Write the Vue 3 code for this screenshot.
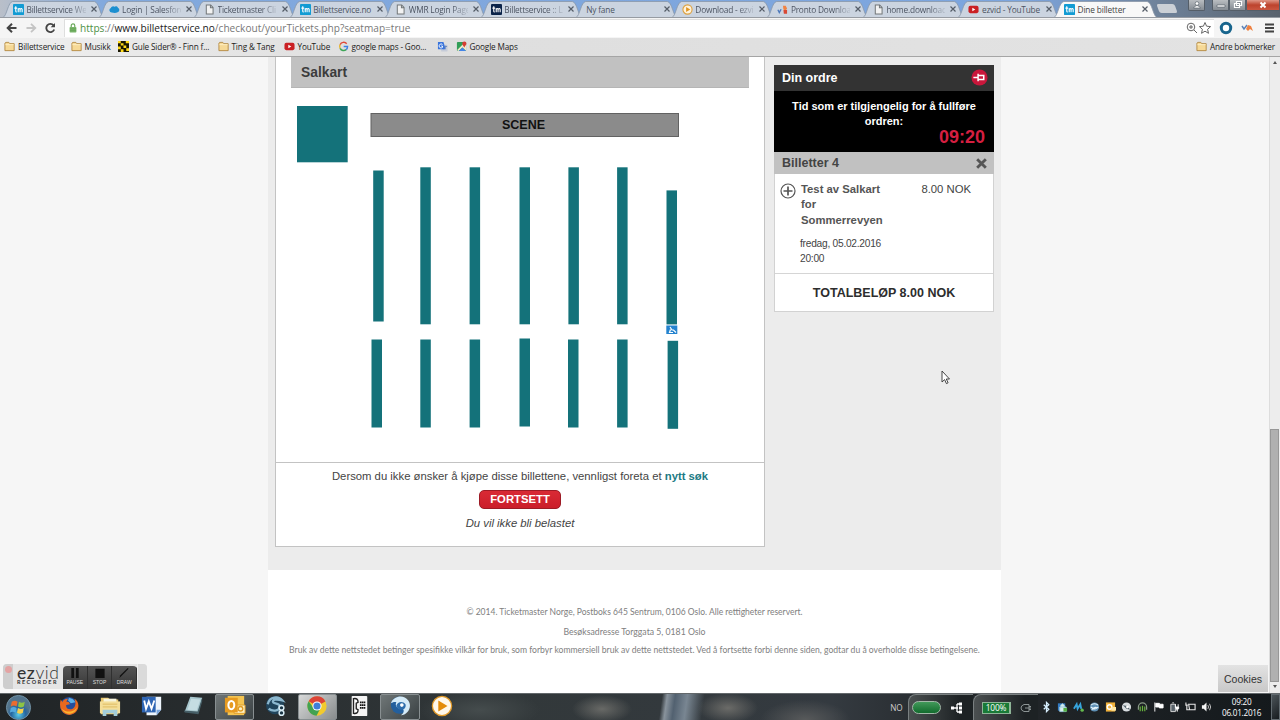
<template>
  <svg class="sprite" width="0" height="0">
    <symbol id="i-tm" viewBox="0 0 12 12"><rect width="12" height="12" rx=".5" fill="#129bd3" /><path d="M3 2.5v5.3q0 1 1.2 1M1.5 4.5h3M5.7 9V4.5M5.7 6q1.2-2.3 2 0v3M7.7 6q1.6-2.3 2.3 0v3" fill="none" stroke="#fff" stroke-width="1.2" /></symbol>
    <symbol id="i-tmdark" viewBox="0 0 12 12"><rect width="12" height="12" rx="1" fill="#0b2349" /><path d="M3 2.5v5.3q0 1 1.2 1M1.5 4.5h3M5.7 9V4.5M5.7 6q1.2-2.3 2 0v3M7.7 6q1.6-2.3 2.3 0v3" fill="none" stroke="#fff" stroke-width="1.2" /></symbol>
    <symbol id="i-cloud" viewBox="0 0 12 12"><path d="M3 9.3a2.6 2.6 0 0 1-1-5A2.7 2.7 0 0 1 6 3a2.5 2.5 0 0 1 3.8 1A2.7 2.7 0 0 1 9.4 9Q7 10.4 3 9.3z" fill="#1c8fd0" /></symbol>
    <symbol id="i-page" viewBox="0 0 12 12"><path d="M2.5 1h4.8l2.6 2.8V11H2.5zM7 1v3h3" fill="#f2f2f2" stroke="#737779" stroke-width="1.1" /></symbol>
    <symbol id="i-play" viewBox="0 0 12 12"><circle cx="6" cy="6" r="5" fill="#fff3dc" stroke="#dda13f" stroke-width="1.2" /><path d="M4.5 3.3v5.4L9 6z" fill="#e29520" /></symbol>
    <symbol id="i-pronto" viewBox="0 0 12 12"><path d="M1 6.2l1.5 3 2-3.5" fill="none" stroke="#4e79bb" stroke-width="1.5" /><path d="M6.5 2h3l1.5 3-1.5 2-2.500-1z" fill="#f08343" /><path d="M7 6.5h4v4H7.5z" fill="#d94935" /></symbol>
    <symbol id="i-yt" viewBox="0 0 12 12"><rect x=".5" y="2" width="11" height="8" rx="2" fill="#ca2024" /><path d="M4.7 4v4L8 6z" fill="#fff" /></symbol>
    <symbol id="i-folder" viewBox="0 0 12 12"><path d="M1 10.5V2.3L2 1.5h3.3l1 1.4h4.8v7.6z" fill="#f6d997" stroke="#ad8138" stroke-width=".9" /><path d="M1.5 4h9" stroke="#fff0c5" /></symbol>
    <symbol id="i-gule" viewBox="0 0 12 12"><path d="M0 0h12v12H0z" fill="#191600" /><path d="M0 0h3v2.5H0zM8.5 0H12v2.5H8.5zM3 2.5h3V5H3zM6 5h3v2.5H6zM0 6h3v3H0zM9 8h3v3H9zM3 9h3v3H3z" fill="#ffda18" /></symbol>
    <symbol id="i-google" viewBox="0 0 12 12"><g fill="none" stroke-width="1.6"><path d="M9.5 3A4.3 4.3 0 0 0 2.3 4" stroke="#df4937" /><path d="M2.3 4a4.3 4.3 0 0 0 0 4" stroke="#e7b42e" /><path d="M2.3 8a4.3 4.3 0 0 0 6.6 1.4" stroke="#3da657" /><path d="M8.9 9.4q1.5-1 1.5-3.3H6.2" stroke="#3f7fe3" /></g></symbol>
    <symbol id="i-translate" viewBox="0 0 12 12"><rect x="4.5" y="4" width="7" height="7.5" rx="1" fill="#c5cbd8" /><path d="M1 1h6l2.5 8H1z" fill="#3974dc" /><path d="M6 3.8A2.2 2.2 0 1 0 6 7V5.5H4.5" fill="none" stroke="#fff" /><path d="M7.5 6h3.5M9.5 5v1q-.5 2-2 3.2" fill="none" stroke="#5c7fbb" stroke-width=".8" /></symbol>
    <symbol id="i-maps" viewBox="0 0 12 12"><rect x="1" y="1" width="10" height="10" rx="1" fill="#319e57" /><path d="M1 10L10 1l1 2v8l-4-4-4 4z" fill="#f0e8cb" /><path d="M3 11l4-4 4 4z" fill="#4384e8" /><path d="M9 7C8 5 6.8 4.5 6.8 2.8a2.3 2.3 0 0 1 4.6 0C11.4 4.5 10 5 9 7z" fill="#d53e34" /></symbol>

    <symbol id="t-firefox" viewBox="0 0 24 24"><circle cx="12" cy="12" r="9.7" fill="#264d9b" /><path d="M12 3q5 1 7 5l-5 1-3-3z" fill="#5bb2e8" /><path d="M3 5q-2 7 1 12c5 8 16 5 18-3 1-5-1-8-4-10 2 5 1 9-2 11-4 2-8-1-7-4l4-1-1-2-3-1 2-3C7 4 5 6 5 8z" fill="#e8681e" /><path d="M4 15c4 8 15 7 17-2-2 4-10 8-17 2z" fill="#f9b42f" /></symbol>
    <symbol id="t-explorer" viewBox="0 0 24 24"><path d="M2 3h8l2 2h9v16H2z" fill="#e9c76c" /><path d="M5 4h14v5H5z" fill="#f7f5de" /><path d="M1 7h22v13H1z" fill="#f4de98" /><path d="M4 23v-7h16v7h-4v-3H8v3z" fill="#a3cdd9" /><path d="M4 10h16M4 13h16" stroke="#ddb95f" /></symbol>
    <symbol id="t-word" viewBox="0 0 24 24"><path d="M6 2h16v14l-5 6H6z" fill="#eef5fc" /><path d="M1 2h15v17H1z" fill="#2e65b4" /><path d="M3.5 6l2 9 3-8 3 8 3-9" fill="none" stroke="#fff" stroke-width="2" /><path d="M17 16h5l-5 6z" fill="#7ba6dc" /></symbol>
    <symbol id="t-note" viewBox="0 0 24 24"><path d="M9 2l13 1-4 16-15-1z" fill="#a8c7ce" /><path d="M10 4l10 1-4 12-10-1z" fill="#c5dde2" /><path d="M2 17l15 1 5-15v4l-4 14-15-2z" fill="#465f67" /></symbol>
    <symbol id="t-outlook" viewBox="0 0 24 24"><path d="M4 1h18v21H4z" fill="#f4c451" /><path d="M11 11h12v9H11z" fill="#fff2c6" stroke="#dc9a24" /><path d="M1 3h14v16H1z" fill="#e69a20" /><ellipse cx="8" cy="11" rx="3.2" ry="4.5" fill="none" stroke="#fff" stroke-width="2.2" /><circle cx="18" cy="15" r="2.5" fill="none" stroke="#e09c24" stroke-width="1.5" /></symbol>
    <symbol id="t-swirl" viewBox="0 0 24 24"><circle cx="11" cy="11" r="10" fill="#20445b" /><path d="M3 10c2-9 12-9 16-4-6-2-12-1-10 2 2 2 8 1 7 5-1 5-8 5-12 2" fill="none" stroke="#8bb7ce" stroke-width="2.5" /><circle cx="18" cy="14" r="2.600" fill="#173243" stroke="#d9edf5" stroke-width="1.6" /><circle cx="18" cy="19.500" r="2.600" fill="#173243" stroke="#d9edf5" stroke-width="1.6" /></symbol>
    <symbol id="t-chrome" viewBox="0 0 24 24"><circle cx="12" cy="12" r="10.5" fill="#f1ca2e" /><path d="M12 12L2.9 6.7A10.5 10.5 0 0 1 21.2 7z" fill="#dc4437" /><path d="M2.9 6.7A10.5 10.5 0 0 0 11.5 22.5L16 14l-8 0z" fill="#42a252" /><circle cx="12" cy="12" r="5" fill="#fff" /><circle cx="12" cy="12" r="3.9" fill="#3f7fd8" /></symbol>
    <symbol id="t-phone" viewBox="0 0 24 24"><rect x="4" y="1" width="17" height="22" rx="1" fill="#f4f4f4" /><path d="M6 4q5-1 5 4l-2 1v6l2 1q0 5-5 4z" fill="#fff" stroke="#222" stroke-width="1.5" /><path d="M13 8h6M13 11h6M13 14h6" stroke="#111" stroke-width="2" stroke-dasharray="1.7 .4" /></symbol>
    <symbol id="t-bird" viewBox="0 0 24 24"><circle cx="11.5" cy="11" r="9.5" fill="#235f9d" /><path d="M2 9C5 1 16-1 21 6c5 7-1 16-8 16 3-2 4-5 2-7-6 1-9-3-7-7-2-1-4 0-6 1z" fill="#d5ebf8" /><path d="M8 12c1-5 7-6 10-2 1 4-2 6-5 6-2 0-4-1-5-4z" fill="#2e6dab" /><circle cx="14" cy="11" r="2" fill="#fff" /></symbol>
    <symbol id="t-play" viewBox="0 0 24 24"><circle cx="12" cy="12" r="10.5" fill="#fff8eb" stroke="#e29a28" stroke-width="1.4" /><path d="M8 6v12l10-6z" fill="#e48c0a" /></symbol>

    <symbol id="s-bt" viewBox="0 0 12 12"><path d="M3 3.5l5.5 5L6 11V1l2.5 2.5L3 8.5" fill="none" stroke="#d8f0ff" stroke-width="1.4" /></symbol>
    <symbol id="s-lock" viewBox="0 0 12 12"><rect x="1" y="2" width="8" height="8" fill="#347bc3" /><path d="M4 6V4q2-3 4 0v2M3 6h7v5H3z" fill="#d9f0ee" stroke="#9dc8dd" /><path d="M7 7h4v4H7z" fill="#54ae45" /></symbol>
    <symbol id="s-m" viewBox="0 0 12 12"><path d="M1 8l3-5 1 5 3-5 1 5" fill="none" stroke="#36a4dc" stroke-width="2" /><circle cx="10" cy="9.5" r="1.8" fill="#64b94d" /></symbol>
    <symbol id="s-globe" viewBox="0 0 12 12"><circle cx="6" cy="6" r="5" fill="#5f90b5" /><path d="M2 4q4-3 8 0M2 6q5 4 8 0M3 9q3-4 6-2" fill="none" stroke="#e6f4fa" stroke-width="1.2" /></symbol>
    <symbol id="s-out" viewBox="0 0 12 12"><path d="M1 1h10v10H1z" fill="#f1b23b" /><circle cx="5" cy="6" r="2.5" fill="none" stroke="#fff" stroke-width="1.6" /><path d="M7 6h5v4H7z" fill="#ffe9a7" /></symbol>
    <symbol id="s-disc" viewBox="0 0 12 12"><circle cx="6" cy="6" r="5" fill="#d8dde0" /><path d="M2 4l5 1 3 4-4-1z" fill="#51606a" /><circle cx="7" cy="6" r="1.5" fill="#fff" /></symbol>
    <symbol id="s-head" viewBox="0 0 12 12"><path d="M1.5 9V6a4.5 4.5 0 0 1 9 0v3" fill="none" stroke="#8a9a88" stroke-width="1.3" /><path d="M3.5 5.5v5M6 4.5v6M8.5 5.5v5" stroke="#67b23d" stroke-width="1.3" /></symbol>
    <symbol id="s-flag" viewBox="0 0 12 12"><path d="M2 1v10M3 2h4v1h4v4H7V6H3z" fill="#fff" stroke="#fff" /></symbol>
    <symbol id="s-power" viewBox="0 0 12 12"><path d="M2 3h5v8H2zM3.5 1.5h2" fill="#59636a" stroke="#ddd" /><path d="M7 3v3M10 3v3M6.5 6h4v2L9 9v2" fill="#fff" stroke="#fff" /></symbol>
    <symbol id="s-net" viewBox="0 0 12 12"><path d="M4 3h7v6H5zM1 1v3h2M2 4v5h3" fill="none" stroke="#e9e9e9" stroke-width="1.2" /></symbol>
    <symbol id="s-sound" viewBox="0 0 12 12"><path d="M1 4h2l3-3v10L3 8H1z" fill="#f4f4f4" /><path d="M7.5 4q1.5 2 0 4M9.3 2.5q2.5 3.5 0 7" fill="none" stroke="#ccc" /></symbol>
  </svg>

  <div class="screen">
    <header class="browser">
      <div class="tabs">
        <div v-for="(tab, i) in tabs" :key="i" class="tab" :class="{ '--active': tab.active }">
          <svg class="tab__shape" viewBox="0 0 104 17" preserveAspectRatio="none">
            <path d="M0 17.5C4 16 5 2 10 1.5H94C99 2 100 16 104 17.5" />
          </svg>
          <svg v-if="tab.icon" class="tab__icon"><use :href="'#i-' + tab.icon" /></svg>
          <span class="tab__title" :class="{ '--fade': tab.fade }">{{ tab.title }}</span>
          <svg class="tab__close" viewBox="0 0 8 8"><path d="M1.5 1.5l5 5M6.5 1.5l-5 5" /></svg>
        </div>
        <div class="tabs__new"></div>
        <div class="win">
          <span class="win__btn --user"><svg viewBox="0 0 14 10"><circle cx="7" cy="3.5" r="1.8" /><path d="M3.5 8q3.5-5 7 0z" /></svg></span>
          <span class="win__btn"><svg viewBox="0 0 14 10"><path d="M3 5h8v2H3z" /></svg></span>
          <span class="win__btn"><svg viewBox="0 0 14 10"><path d="M5.5 1.5h5v4h-5zM3.5 3.5h5v4h-5z" class="hollow" /></svg></span>
          <span class="win__btn --close"><svg viewBox="0 0 14 10"><path d="M4.5 2.5l5 5M9.5 2.5l-5 5" class="x" /></svg></span>
        </div>
      </div>

      <div class="toolbar">
        <svg class="toolbar__nav" viewBox="0 0 60 20">
          <path d="M16.5 10H8M12 5.8L7.7 10l4.3 4.2" stroke="#444" stroke-width="2" />
          <path d="M26.5 10H35M31 5.8l4.3 4.2L31 14.2" stroke="#c4c4c4" stroke-width="1.8" />
          <path d="M53.5 7.3A4.1 4.1 0 1 0 54.2 11.5" stroke="#444" stroke-width="1.9" />
          <path d="M55 5v4.3h-4.3z" fill="#444" />
        </svg>
        <div class="url">
          <svg class="url__lock" viewBox="0 0 9 12"><path d="M2.5 5V3.3a2 2 0 0 1 4 0V5" fill="none" stroke="#69a85a" stroke-width="1.3" /><rect x=".7" y="5" width="7.6" height="6" rx=".8" fill="#79b56a" /><path d="M1 7h7M1 9h7" stroke="#579848" stroke-width=".6" /></svg>
          <span class="url__text"><i>https</i>://<b>www.billettservice.no</b>/checkout/yourTickets.php?seatmap=true</span>
          <svg class="url__icons" viewBox="0 0 28 14">
            <circle cx="6" cy="6" r="3.8" /><path d="M9 9l3 3M4 6h4M6 4v4" />
            <path d="M20 1.5l1.6 3.7 4 .4-3 2.7.9 4-3.5-2.1-3.5 2.1.9-4-3-2.7 4-.4z" />
          </svg>
        </div>
        <svg class="toolbar__ext" viewBox="0 0 60 20">
          <circle cx="12" cy="10" r="4.7" fill="#fff" stroke="#18658d" stroke-width="3" />
          <path d="M28 8l2 3 3-4" stroke="#5b83b8" stroke-width="1.5" fill="none" /><path d="M32 11l2-4 3 1 2 5-3-2-2 2z" fill="#ee8040" />
          <path d="M51 6.5h9M51 10h9M51 13.5h9" stroke="#444" stroke-width="1.8" />
        </svg>
      </div>

      <nav class="bookmarks">
        <a v-for="mark in bookmarks" :key="mark.icon + mark.label" class="bookmark" :style="{ width: mark.width + 'px' }">
          <svg><use :href="'#i-' + mark.icon" /></svg>{{ mark.label }}
        </a>
        <a class="bookmark --other"><svg><use href="#i-folder" /></svg>Andre bokmerker</a>
      </nav>
    </header>

    <main class="page">
      <div class="site">
        <div class="site__body">
          <section class="tickets">
            <h2 class="tickets__title">Salkart</h2>
            <svg class="seatmap" viewBox="276 88 488 374">
              <rect x="297" y="106" width="50.7" height="56.3" class="seats" />
              <rect x="371" y="113.5" width="307.5" height="23" class="stage" />
              <text x="523.5" y="129" class="stage__label">SCENE</text>
              <rect v-for="(r, i) in rows" :key="i" :x="r[0]" :y="r[1]" width="10.5" :height="r[2]" class="seats" />
              <rect x="666.3" y="325.5" width="11" height="8.5" fill="#2483cf" />
              <path d="M670 327l2 3h1.5l2.5 2.5M670.5 329.5l-1 3h3.5" fill="none" stroke="#fff" stroke-width="1.2" />
            </svg>
            <div class="tickets__next">
              <p class="search">Dersom du ikke ønsker å kjøpe disse billettene, vennligst foreta et <a>nytt søk</a></p>
              <button class="continue"><span>FORTSETT</span></button>
              <p class="note">Du vil ikke bli belastet</p>
            </div>
          </section>

          <aside class="order">
            <div class="order__head">
              <span>Din ordre</span>
              <svg viewBox="0 0 18 18"><circle cx="9" cy="9" r="8.5" fill="#c9173b" /><path d="M2.5 9H7M7.5 5v8M7.5 6.8h6v4.4h-6" fill="none" stroke="#fff" stroke-width="1.6" /></svg>
            </div>
            <div class="order__timer">
              <p>Tid som er tilgjengelig for å fullføre ordren:</p>
              <strong>09:20</strong>
            </div>
            <div class="order__count">
              <span>Billetter 4</span>
              <svg viewBox="0 0 12 12"><path d="M2 2l8 8M10 2l-8 8" stroke="#555" stroke-width="2.6" /></svg>
            </div>
            <div class="order__item">
              <svg viewBox="0 0 16 16"><circle cx="8" cy="8" r="7" /><path d="M3.5 8h9M8 3.5v9" stroke-width="1.7" /></svg>
              <div class="order__event">
                <b>Test av Salkart<br />for<br />Sommerrevyen</b>
                <p>fredag, 05.02.2016<br />20:00</p>
              </div>
              <span class="order__price">8.00 NOK</span>
            </div>
            <div class="order__total"><span>TOTALBELØP 8.00 NOK</span></div>
          </aside>
        </div>

        <footer class="legal">
          <p class="legal__owner">© 2014. Ticketmaster Norge, Postboks 645 Sentrum, 0106 Oslo. Alle rettigheter reservert.</p>
          <p>Besøksadresse Torggata 5, 0181 Oslo</p>
          <p class="legal__terms">Bruk av dette nettstedet betinger spesifikke vilkår for bruk, som forbyr kommersiell bruk av dette nettstedet. Ved å fortsette forbi denne siden, godtar du å overholde disse betingelsene.</p>
        </footer>
      </div>

      <div class="scrollbar"><i class="up"></i><div class="scrollbar__thumb"></div><i class="down"></i></div>
      <button class="cookies">Cookies</button>

      <div class="recorder">
        <div class="recorder__grip"><i></i></div>
        <div class="recorder__logo"><span><b>ez</b>vid</span><small>RECORDER</small></div>
        <div class="recorder__tools">
          <div><svg viewBox="0 0 14 13"><path d="M3 1h3v11H3zM8 1h3v11H8z" /></svg>PAUSE</div>
          <div><svg viewBox="0 0 14 13"><path d="M2 2h10v10H2z" /></svg>STOP</div>
          <div><svg viewBox="0 0 14 13"><path d="M2 12l1-3 8-8 1 1-8 8z" /></svg>DRAW</div>
        </div>
        <div class="recorder__grip --end"></div>
      </div>

      <svg class="cursor" viewBox="0 0 10 16"><path d="M1 1v11l2.6-2.4 1.8 4 1.7-.8-1.8-3.8H8.5z" fill="#fff" stroke="#333" stroke-width=".9" /></svg>
    </main>

    <footer class="taskbar">
      <svg class="start" viewBox="0 0 28 28">
        <defs><radialGradient id="orb" cy=".8"><stop stop-color="#5bcbe6" /><stop offset=".6" stop-color="#2566a0" /><stop offset="1" stop-color="#53748c" /></radialGradient></defs>
        <circle cx="14" cy="14" r="12.5" fill="url(#orb)" stroke="#7193a5" />
        <path d="M7 8q3-2 6 0l-1 5q-3-2-6 0z" fill="#ec6c2f" /><path d="M14.5 8q3 2 6 0l-1 5q-3 2-6 0z" fill="#8dc444" /><path d="M6 14.5q3-2 6 0l-1 5q-3-2-6 0z" fill="#56a9de" /><path d="M13.5 14.5q3 2 6 0l-1 5q-3 2-6 0z" fill="#f7cf4b" />
      </svg>
      <div class="apps">
        <div v-for="app in apps" :key="app.icon" class="app" :class="app.state">
          <svg><use :href="'#t-' + app.icon" /></svg>
        </div>
      </div>
      <span class="lang">NO</span>
      <div class="dock">
        <i class="pill"></i>
        <svg viewBox="0 0 12 12"><path d="M1 6h6M6 2v8M6 2h3M6 10h3" fill="none" stroke="#fff" stroke-width="1.3" /><path d="M0 4.5h3v3H0zM8 .5h3v3H8zM8 4.5h3v3H8zM8 8.5h3v3H8z" fill="#fff" /></svg>
      </div>
      <div class="dock --battery">
        <span class="charge">100%</span>
        <svg viewBox="0 0 12 12"><path d="M9 2.5H4Q1 3.5 1 6t3 3.5h5zM5 6h6M9 4.5h2M9 7.5h2" fill="none" stroke="#8c9494" /></svg>
      </div>
      <div class="tray">
        <svg v-for="name in tray" :key="name"><use :href="'#s-' + name" /></svg>
      </div>
      <div class="clock">09:20<br />06.01.2016</div>
      <div class="desktop"></div>
    </footer>
  </div>
</template>

<script setup>
const tabs = [
  { icon: 'tm', title: 'Billettservice We', fade: true },
  { icon: 'cloud', title: 'Login | Salesforc', fade: true },
  { icon: 'page', title: 'Ticketmaster Cli', fade: true },
  { icon: 'tm', title: 'Billettservice.no' },
  { icon: 'page', title: 'WMR Login Page', fade: true },
  { icon: 'tmdark', title: 'Billettservice :: Lo', fade: true },
  { icon: '', title: 'Ny fane' },
  { icon: 'play', title: 'Download - ezvi', fade: true },
  { icon: 'pronto', title: 'Pronto Downloa', fade: true },
  { icon: 'page', title: 'home.download', fade: true },
  { icon: 'yt', title: 'ezvid - YouTube' },
  { icon: 'tm', title: 'Dine billetter', active: true },
]

const bookmarks = [
  { icon: 'folder', label: 'Billettservice', width: 66.5 },
  { icon: 'folder', label: 'Musikk', width: 47.5 },
  { icon: 'gule', label: 'Gule Sider® - Finn f...', width: 99.5 },
  { icon: 'folder', label: 'Ting & Tang', width: 66 },
  { icon: 'yt', label: 'YouTube', width: 54 },
  { icon: 'google', label: 'google maps - Goo...', width: 99 },
  { icon: 'translate', label: '', width: 19 },
  { icon: 'maps', label: 'Google Maps', width: 80 },
]

// x, y, height of each block of seats
const rows = [
  [373.2, 170.5, 151],
  [420.3, 167.3, 157],
  [469.6, 167.3, 157],
  [519.5, 167.3, 157],
  [568.4, 167.3, 157],
  [617.1, 167.3, 157],
  [666.5, 190.4, 134],
  [371.5, 339.5, 88],
  [420.3, 339.5, 88],
  [469.6, 339.5, 88],
  [519.5, 338.5, 88],
  [568, 339.5, 88],
  [617.1, 339.5, 88],
  [667.6, 340.8, 88],
]

const apps = [
  { icon: 'firefox' },
  { icon: 'explorer' },
  { icon: 'word' },
  { icon: 'note' },
  { icon: 'outlook', state: '--open' },
  { icon: 'swirl' },
  { icon: 'chrome', state: '--current' },
  { icon: 'phone' },
  { icon: 'bird', state: '--open' },
  { icon: 'play' },
]

const tray = ['bt', 'lock', 'm', 'globe', 'out', 'disc', 'head', 'flag', 'power', 'net', 'sound']
</script>

<style>
body {
  overflow: hidden;
}
</style>

<style scoped>
* {
  box-sizing: border-box;
}

svg {
  flex: none;
  display: block;
}

p,
h2 {
  margin: 0;
}

.sprite {
  position: absolute;
}

.screen {
  width: 1280px;
  height: 720px;
  display: flex;
  flex-direction: column;
  font-family: 'Liberation Sans', Arial, sans-serif;
  color: #444;
}

.browser {
  height: 57px;
  font-family: 'Open Sans', 'Noto Sans', sans-serif;
}

.tabs {
  height: 17px;
  padding-left: 3px;
  display: flex;
  background: linear-gradient(90deg, #b9bfc9, #82a9dd 8%, #7ca5de 80%, #70849d 90%, #59626d);
}

.tab {
  position: relative;
  width: 95.55px;
  flex: none;
  padding: 1px 0 0 10px;
  display: flex;
  align-items: center;
  font-size: 8.3px;
  letter-spacing: -0.2px;
  color: #4d5563;
}

.tab__shape {
  position: absolute;
  left: 0;
  top: 0;
  width: 101px;
  height: 17px;
  fill: #cbd4e0;
  stroke: #8996a8;
  stroke-width: 0.8;
}

.tab.--active {
  width: 102px;
  z-index: 2;
  letter-spacing: -0.15px;
  color: #444;
}

.--active .tab__shape {
  width: 103px;
  fill: #f8f8f8;
}

.tab__icon {
  position: relative;
  width: 11px;
  height: 11px;
  margin-right: 2.5px;
}

.tab__title {
  position: relative;
  flex: 1;
  min-width: 0;
  white-space: nowrap;
}

.tab__title.--fade {
  mask-image: linear-gradient(90deg, #000 72%, rgba(0, 0, 0, 0.15));
}

.tab__close {
  position: relative;
  width: 8px;
  height: 8px;
  margin: 0 1px 0 4px;
  stroke: #555d68;
  stroke-width: 1.2;
}

.--active .tab__close {
  margin-right: 7px;
}

.tabs__new {
  width: 18px;
  height: 9px;
  margin: 4px 0 0 2px;
  transform: skewX(20deg);
  border-radius: 2px;
  background: #cbd0d6;
}

.win {
  margin-left: auto;
  display: flex;
  height: 11px;
}

.win__btn {
  width: 17px;
  border: 1px solid #555e68;
  border-top: 0;
  border-radius: 0 0 2px 2px;
  background: linear-gradient(#b9bdc1, #858c94);
}

.win__btn svg {
  width: 14px;
  height: 10px;
  margin: 0 auto;
  fill: #fff;
  stroke: #4f5962;
  stroke-width: 0.6;
}

.win__btn .hollow {
  fill: #858c94;
  stroke: #fff;
  stroke-width: 1.2;
}

.win__btn .x {
  stroke: #fff;
  stroke-width: 2;
}

.win__btn.--user {
  margin-right: 7px;
}

.win__btn.--close {
  width: 34px;
  background: linear-gradient(#df9787, #bd432d 50%, #ca5640);
}

.toolbar {
  height: 21px;
  display: flex;
  align-items: center;
  border-top: 1px solid #969ba2;
  background: #f5f5f5;
}

.toolbar__nav {
  width: 60px;
  height: 20px;
  fill: none;
}

.url {
  width: 1150px;
  height: 18px;
  margin-left: 4px;
  padding: 0 1px 1px 4px;
  display: flex;
  align-items: center;
  background: #fff;
  border: 1px solid #dedede;
  border-width: 1px 0 0 1px;
}

.url__lock {
  width: 8px;
  height: 12px;
}

.url__text {
  margin-left: 3px;
  font-size: 10.1px;
  color: #777;
}

.url__text i {
  font-style: normal;
  color: #4e9144;
}

.url__text b {
  font-weight: 400;
  color: #222;
}

.url__icons {
  width: 28px;
  height: 14px;
  margin-left: auto;
  fill: none;
  stroke: #666;
}

.toolbar__ext {
  width: 60px;
  height: 20px;
}

.bookmarks {
  height: 19px;
  padding: 0 5px 1px 4px;
  display: flex;
  align-items: center;
  background: linear-gradient(90deg, #efefef, #dedede 30%, #e3e3e3);
  border-bottom: 1px solid #a5a5a5;
}

.bookmark {
  display: flex;
  align-items: center;
  gap: 3px;
  flex: none;
  font-size: 8.2px;
  letter-spacing: -0.15px;
  white-space: nowrap;
  color: #222;
}

.bookmark svg {
  width: 11px;
  height: 11px;
}

.bookmark.--other {
  margin-left: auto;
}

.page {
  position: relative;
  height: 636px;
  background: #f6f6f6;
}

.site {
  width: 733px;
  height: 636px;
  margin-left: 268px;
  background: #fff;
}

.site__body {
  height: 513px;
  padding: 0 7px;
  display: flex;
  justify-content: space-between;
  align-items: flex-start;
  background: #ececec;
}

.tickets {
  width: 490px;
  height: 490px;
  border: 1px solid #c3c3c3;
  border-top: 0;
  background: #fff;
}

.tickets__title {
  height: 31px;
  margin: 0 15px;
  padding-left: 10px;
  line-height: 31px;
  font-size: 13.8px;
  color: #3c3c3c;
  background: #c1c1c1;
  border-bottom: 1px solid #b5b5b5;
}

.seatmap {
  width: 488px;
  height: 374px;
}

.seats {
  fill: #14727a;
}

.stage {
  fill: #8b8b8b;
  stroke: #626262;
}

.stage__label {
  font-size: 12.5px;
  font-weight: 700;
  text-anchor: middle;
  fill: #111;
}

.tickets__next {
  height: 84px;
  padding-top: 6px;
  border-top: 1px solid #c3c3c3;
  display: flex;
  flex-direction: column;
  align-items: center;
  font-size: 11.3px;
  line-height: 14px;
}

.search a {
  color: #1c7a84;
  font-weight: 700;
}

.continue {
  width: 82px;
  height: 19px;
  margin: 7px 0;
  padding: 0 0 2px;
  border: 1px solid #9d1b25;
  border-radius: 5px;
  font: 700 11.3px 'Liberation Sans', Arial, sans-serif;
  color: #fff;
  background: linear-gradient(#d92a35, #cb1e2a);
}

.note {
  font-style: italic;
}

.order {
  width: 220px;
  margin-top: 8px;
  background: #fff;
  border: 1px solid #d2d2d2;
  border-top: 0;
}

.order__head,
.order__count {
  margin: 0 -1px;
  display: flex;
  align-items: center;
  justify-content: space-between;
  padding: 0 6px 0 8px;
  font-size: 12.5px;
  font-weight: 700;
}

.order__head {
  height: 26px;
  padding-bottom: 1px;
  color: #fff;
  background: #333;
}

.order__head svg {
  width: 17px;
  height: 17px;
}

.order__timer {
  height: 61px;
  margin: 0 -1px;
  padding: 8px 9px 0;
  background: #000;
  color: #fff;
  font-size: 11px;
  line-height: 15.3px;
  font-weight: 700;
  text-align: center;
}

.order__timer strong {
  display: block;
  font-size: 18px;
  line-height: 15px;
  text-align: right;
  color: #d51f40;
}

.order__count {
  height: 22px;
  background: #c1c1c1;
  color: #444;
}

.order__count svg {
  width: 13px;
  height: 13px;
}

.order__item {
  height: 99px;
  padding: 8px 22px 0 5px;
  display: flex;
  font-size: 11.3px;
  line-height: 15.4px;
}

.order__event b {
  color: #555;
}

.order__item svg {
  width: 16px;
  height: 16px;
  margin: 1px 5px 0 0;
  fill: none;
  stroke: #555;
  stroke-width: 1.2;
}

.order__event p {
  margin: 7.5px 0 0 -1px;
  font-size: 10.2px;
  letter-spacing: -0.25px;
}

.order__price {
  margin-left: auto;
}

.order__total {
  height: 38px;
  border-top: 1px solid #d5d5d5;
  text-align: center;
  line-height: 38px;
  font-size: 12.5px;
  font-weight: 700;
  color: #2d2d2d;
}

.legal {
  height: 123px;
  padding-top: 33px;
  text-align: center;
  font: 8.7px/19px Lato, sans-serif;
  color: #808080;
  white-space: nowrap;
}

.legal p {
  margin: 0 -10px;
}

.legal .legal__owner {
  font-size: 8.53px;
}

.legal .legal__terms {
  font-size: 8.6px;
}

.scrollbar {
  position: absolute;
  right: 0;
  top: 0;
  width: 11px;
  height: 636px;
  background: #ededed;
  border-left: 1px solid #ddd;
}

.scrollbar__thumb {
  position: absolute;
  top: 372px;
  left: 0;
  width: 9px;
  height: 253px;
  background: #b0b0b0;
  border: 1px solid #979797;
}

.up,
.down {
  position: absolute;
  left: 3px;
  border: 2px solid transparent;
}

.up {
  top: 2px;
  border-bottom: 3px solid #555;
}

.down {
  bottom: 3px;
  border-top: 3px solid #555;
}

.cookies {
  position: absolute;
  right: 12px;
  bottom: 1px;
  width: 50px;
  height: 27px;
  padding: 0;
  border: 0;
  background: linear-gradient(#e3e3e3, #c8c8c8);
  color: #333;
  font: 10.5px 'Liberation Sans', Arial, sans-serif;
}

.recorder {
  position: absolute;
  left: 3px;
  bottom: 4px;
  width: 144px;
  height: 25px;
  display: flex;
  border-radius: 4px;
  background: #e5e5e5;
}

.recorder__grip {
  width: 10px;
  background: #cecece;
  padding: 2px;
  border-radius: 4px 0 0 4px;
}

.recorder__grip.--end {
  background: #dadada;
  border-left: 1px solid #eee;
  border-radius: 0 4px 4px 0;
}

.recorder__grip i {
  display: block;
  width: 7px;
  height: 7px;
  border-radius: 50%;
  background: #e3a3a3;
}

.recorder__logo {
  width: 50px;
  padding: 2px 0 0 4px;
  font-family: Lato, sans-serif;
  color: #333;
}

.recorder__logo span {
  display: block;
  font-size: 17.5px;
  line-height: 13px;
  font-weight: 300;
  letter-spacing: 0.6px;
}

.recorder__logo b {
  font-weight: 500;
}

.recorder__logo small {
  display: block;
  font-size: 5.5px;
  font-weight: 700;
  line-height: 6px;
  letter-spacing: 1.5px;
}

.recorder__tools {
  width: 74px;
  margin-top: 2px;
  display: flex;
  border-radius: 4px 4px 0 0;
  overflow: hidden;
  background: linear-gradient(#555, #353535);
}

.recorder__tools div {
  flex: 1;
  padding-top: 1px;
  border-right: 1px solid #303030;
  font-size: 5px;
  line-height: 6px;
  text-align: center;
  color: #ddd;
}

.recorder__tools svg {
  width: 14px;
  height: 12px;
  margin: 0 auto;
  fill: #111;
}

.cursor {
  position: absolute;
  left: 941px;
  top: 313px;
  width: 10px;
  height: 16px;
}

.taskbar {
  height: 27px;
  display: flex;
  align-items: center;
  color: #fff;
  font-family: 'Open Sans', 'Noto Sans', sans-serif;
  border-top: 1px solid #63686b;
  background:
    radial-gradient(ellipse 30px 14px at 602px 15px, #686966, transparent),
    radial-gradient(ellipse 30px 15px at 728px 14px, #6b6b68, transparent),
    radial-gradient(ellipse 45px 20px at 805px 26px, #585a5b, transparent),
    linear-gradient(98deg, transparent 656px, #89939c 661px, #526170 669px, #798692 681px, transparent 698px),
    radial-gradient(ellipse 60px 20px at 480px 16px, #454c4d, transparent),
    linear-gradient(90deg, #202426, #32383a 40%, #343a40 65%, #24282b 75%, #14191c);
}

.start {
  width: 27px;
  height: 27px;
  margin: 0 16.3px 0 5px;
}

.apps {
  display: flex;
}

.app {
  width: 41.4px;
  height: 26px;
}

.app svg {
  width: 22px;
  height: 22px;
  margin: 1px auto;
}

.app.--open,
.app.--current {
  width: 39.4px;
  margin: 0 1px;
  border: 1px solid #888f91;
  border-radius: 2px;
  background: linear-gradient(135deg, #6f7677, #3a4143);
}

.app.--open svg,
.app.--current svg {
  margin-top: 0;
}

.app.--current {
  background: linear-gradient(135deg, #d8d9d9, #888c8d);
}

.lang {
  margin-left: 428px;
  width: 18px;
  font-size: 8.2px;
  letter-spacing: -0.2px;
  color: #ccc;
}

.dock {
  width: 66px;
  height: 26px;
  padding-left: 3px;
  display: flex;
  align-items: center;
  gap: 10px;
  border-left: 1px solid #7a8081;
  border-top: 1px solid #7a8081;
  border-radius: 8px 0 0;
  background: linear-gradient(90deg, #4b5051, #1d2224 80%);
}

.dock svg {
  width: 12px;
  height: 12px;
}

.pill {
  width: 29px;
  height: 13px;
  border: 1px solid #a2b8a8;
  border-radius: 7px;
  background: linear-gradient(#42995a, #126b2d);
}

.dock.--battery {
  padding-left: 8px;
  gap: 9px;
}

.charge {
  width: 29px;
  height: 12px;
  border: 1px solid #8eb597;
  border-right-width: 2px;
  background: #197a37;
  text-align: center;
  font-size: 8.4px;
  letter-spacing: -0.2px;
  line-height: 10px;
}

.tray {
  display: flex;
  gap: 5px;
  margin-left: 3px;
}

.tray svg {
  width: 11px;
  height: 12px;
}

.clock {
  width: 60px;
  text-align: center;
  font-size: 8.2px;
  letter-spacing: -0.25px;
  line-height: 11px;
}

.desktop {
  width: 9px;
  height: 26px;
  margin-left: auto;
  border: 1px solid #626b70;
  background: linear-gradient(135deg, #4c5459, #171c1f);
}
</style>
